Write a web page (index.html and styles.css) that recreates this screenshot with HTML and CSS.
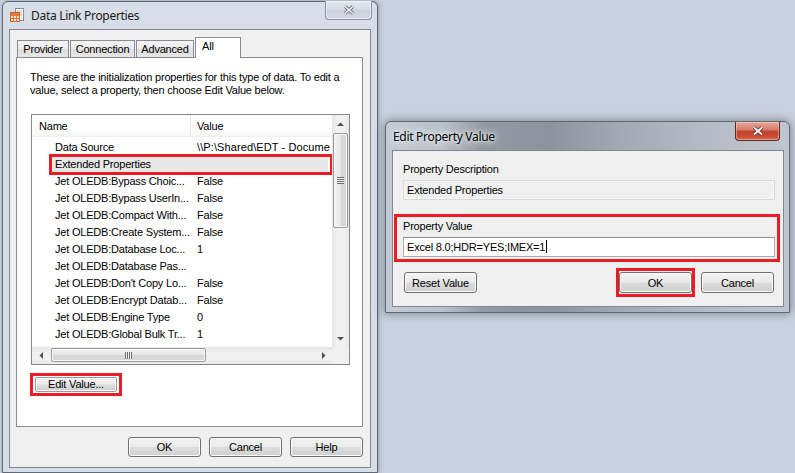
FILE: index.html
```html
<!DOCTYPE html>
<html><head><meta charset="utf-8"><title>Data Link Properties</title>
<link rel="stylesheet" href="styles.css">
</head><body>

<!-- Data Link Properties (inactive window) -->
<div class="win win-main">
	<div class="titlebar">
		<svg class="appicon" width="14" height="15" viewBox="0 0 14 15">
			<rect x="5.5" y="0.5" width="8" height="12" fill="#fff" stroke="#8c8c8c"/>
			<path d="M7 3h5M7 5h5M7 7h5" stroke="#b5b5b5"/>
			<rect x="0.5" y="4.5" width="9" height="9" fill="#fbe2c8" stroke="#d0602a"/>
			<path d="M0.5 7.5h9M0.5 10.5h9M3.5 4.5v9M6.5 4.5v9" stroke="#e07a3c"/>
			<rect x="1" y="5" width="8" height="2" fill="#e9743a"/>
		</svg>
		<span class="title">Data Link Properties</span>
		<div class="close close-off">
			<svg width="12" height="10" viewBox="0 0 12 10"><path d="M2 1.5l8 7M10 1.5l-8 7" stroke="#6d7581" stroke-width="3.4"/><path d="M2 1.5l8 7M10 1.5l-8 7" stroke="#f4f6f9" stroke-width="1.6"/></svg>
		</div>
	</div>
	<div class="client">
		<div class="tabs">
			<div class="tab t-provider">Provider</div>
			<div class="tab t-connection">Connection</div>
			<div class="tab t-advanced">Advanced</div>
			<div class="tab tab-on t-all">All</div>
		</div>
		<div class="panel">
			<div class="desc">These are the initialization properties for this type of data. To edit a<br>value, select a property, then choose Edit Value below.</div>
			<div class="listview">
				<div class="lv-body">
					<div class="lv-head"><div class="hcol hcol-name">Name</div><div class="hcol">Value</div></div>
					<div class="row"><span class="c-name">Data Source</span><span class="c-val c-wide">\\P:\Shared\EDT - Docume</span></div>
					<div class="row row-sel"><span class="c-name">Extended Properties</span><span class="c-val"></span><div class="mark mark-row"></div></div>
					<div class="row"><span class="c-name">Jet OLEDB:Bypass Choic...</span><span class="c-val">False</span></div>
					<div class="row"><span class="c-name">Jet OLEDB:Bypass UserIn...</span><span class="c-val">False</span></div>
					<div class="row"><span class="c-name">Jet OLEDB:Compact With...</span><span class="c-val">False</span></div>
					<div class="row"><span class="c-name">Jet OLEDB:Create System...</span><span class="c-val">False</span></div>
					<div class="row"><span class="c-name">Jet OLEDB:Database Loc...</span><span class="c-val">1</span></div>
					<div class="row"><span class="c-name">Jet OLEDB:Database Pas...</span><span class="c-val"></span></div>
					<div class="row"><span class="c-name">Jet OLEDB:Don't Copy Lo...</span><span class="c-val">False</span></div>
					<div class="row"><span class="c-name">Jet OLEDB:Encrypt Datab...</span><span class="c-val">False</span></div>
					<div class="row"><span class="c-name">Jet OLEDB:Engine Type</span><span class="c-val">0</span></div>
					<div class="row"><span class="c-name">Jet OLEDB:Global Bulk Tr...</span><span class="c-val">1</span></div>
				</div>
				<div class="vscroll">
					<div class="sbtn"><svg width="7" height="4" viewBox="0 0 7 4"><path d="M0 4h7L3.5 0.5z" fill="#505050"/></svg></div>
					<div class="vtrack"><div class="thumb vthumb"><span class="grip-v"></span></div></div>
					<div class="sbtn"><svg width="7" height="4" viewBox="0 0 7 4"><path d="M0 0h7L3.5 3.5z" fill="#505050"/></svg></div>
				</div>
				<div class="hscroll">
					<div class="sbtn"><svg width="4" height="7" viewBox="0 0 4 7"><path d="M4 0v7L0.5 3.5z" fill="#505050"/></svg></div>
					<div class="htrack"><div class="thumb hthumb"><span class="grip-h"></span></div></div>
					<div class="sbtn"><svg width="4" height="7" viewBox="0 0 4 7"><path d="M0 0v7L3.5 3.5z" fill="#505050"/></svg></div>
				</div>
				<div class="corner"></div>
			</div>
			<div class="mark mark-edit"><button class="btn btn-edit">Edit Value...</button></div>
		</div>
		<div class="btnrow">
			<button class="btn">OK</button>
			<button class="btn">Cancel</button>
			<button class="btn">Help</button>
		</div>
	</div>
</div>

<!-- Edit Property Value (active window) -->
<div class="win win-dlg">
	<div class="titlebar">
		<span class="title title-glow">Edit Property Value</span>
		<div class="close close-red">
			<svg width="12" height="10" viewBox="0 0 12 10"><path d="M2 1.5l8 7M10 1.5l-8 7" stroke="#5a2a22" stroke-width="3.6"/><path d="M2 1.5l8 7M10 1.5l-8 7" stroke="#fff" stroke-width="1.8"/></svg>
		</div>
	</div>
	<div class="client dlg-client">
		<div class="lbl">Property Description</div>
		<div class="field field-ro">Extended Properties</div>
		<div class="mark mark-value">
			<div class="lbl">Property Value</div>
			<div class="field field-in">Excel 8.0;HDR=YES;IMEX=1<span class="caret"></span></div>
		</div>
		<div class="dlg-btns">
			<button class="btn btn-dlg">Reset Value</button>
			<div class="mark mark-ok"><button class="btn btn-dlg">OK</button></div>
			<button class="btn btn-dlg">Cancel</button>
		</div>
	</div>
</div>

</body></html>
```

FILE: styles.css
```css
* { box-sizing: border-box; }

html, body { margin: 0; }

body {
	position: relative;
	width: 795px;
	height: 473px;
	overflow: hidden;
	background: #c8d0df;
	font-family: "Liberation Sans", Arial, sans-serif;
	font-size: 11px;
	letter-spacing: -0.2px;
	color: #000;
}

/* windows */
.win {
	position: absolute;
	display: flex;
	flex-direction: column;
	border: 1px solid #5f6772;
	border-radius: 6px 6px 0 0;
}

.win-main {
	left: 2px;
	top: 1px;
	width: 376px;
	height: 472px;
	padding: 0 6px 4px 6px;
	background: #d7dee8;
	box-shadow: 1px 0 4px rgba(0,0,0,0.25);
}

.win-dlg {
	left: 385px;
	top: 121px;
	width: 405px;
	height: 192px;
	padding: 0 5px 5px 6px;
	background: linear-gradient(to right, #c4cbd4 0%, #bac1ca 14%, #949aa3 24%, #8d939c 40%, #a2a9b2 58%, #b4bbc4 78%, #bfc6ce 100%);
	box-shadow: 0 0 9px 1px rgba(0,0,0,0.35);
}

.titlebar {
	display: flex;
	align-items: center;
	height: 27px;
	flex: none;
}

.win-dlg .titlebar {
	height: 28px;
	padding: 0 0 0 1px;
	align-items: flex-start;
}

.appicon { margin: 0 7px 0 1px; }

.title {
	font-family: "Noto Sans", "Liberation Sans", sans-serif;
	font-size: 12px;
	letter-spacing: -0.3px;
	color: #1a1a1a;
}

.title-glow {
	margin-top: 6px;
	color: #000;
	text-shadow: 0 0 6px #e6eaef, 0 0 10px #e6eaef, 0 0 3px #eef1f4;
}

.close {
	display: flex;
	align-items: center;
	justify-content: center;
	margin-left: auto;
	align-self: flex-start;
	border-radius: 0 0 4px 4px;
}

.close-off {
	width: 47px;
	height: 19px;
	margin-top: -1px;
	margin-right: -1px;
	border: 1px solid #8a929d;
	border-top: none;
	background: linear-gradient(#e3e8ee, #d3dae3 50%, #cbd2dc 51%, #d2d9e2);
	box-shadow: inset 0 0 0 1px rgba(255,255,255,0.5);
}

.close-red {
	width: 45px;
	height: 19px;
	margin-right: 4px;
	border: 1px solid #5c2a22;
	border-top: none;
	background: linear-gradient(#e9a89a, #d47a68 45%, #c0432c 50%, #c94d33 80%, #d9705a);
	box-shadow: inset 0 0 0 1px rgba(255,220,210,0.45);
}

.client {
	display: flex;
	flex-direction: column;
	height: 439px;
	padding: 7px 7px 10px 6px;
	border: 1px solid #7e8792;
	background: #f0f0f0;
}

/* tabs */
.tabs {
	display: flex;
	align-items: flex-end;
	height: 20px;
	padding-left: 1px;
	flex: none;
}

.tab {
	height: 17px;
	line-height: 16px;
	text-align: center;
	border: 1px solid #898c95;
	border-bottom: none;
	background: linear-gradient(#f3f3f3, #ebebeb 50%, #dedede 51%, #e6e6e6);
}

.t-provider { width: 52px; }
.t-connection { width: 65px; margin-left: 1px; }
.t-advanced { width: 58px; margin-left: 1px; }

.tab-on {
	position: relative;
	width: 46px;
	height: 21px;
	margin-bottom: -1px;
	margin-left: 1px;
	padding-left: 6px;
	line-height: 17px;
	text-align: left;
	background: #fff;
	z-index: 1;
}

.panel {
	flex: 1;
	padding: 13px 12px 0 14px;
	border: 1px solid #898c95;
	background: #fff;
}

.desc {
	line-height: 13px;
	white-space: nowrap;
	margin-left: -1px;
}

/* list view */
.listview {
	display: grid;
	grid-template-columns: 300px 17px;
	grid-template-rows: 232px 17px;
	width: 319px;
	height: 251px;
	margin-top: 17px;
	border: 1px solid #828790;
	background: #fff;
}

.lv-body { overflow: hidden; }

.lv-head {
	display: flex;
	height: 22px;
	line-height: 22px;
	margin-bottom: 2px;
	background: linear-gradient(#fff, #fff 55%, #f6f7f8);
	border-bottom: 1px solid #f0f0f0;
}

.hcol { padding-left: 6px; }

.hcol-name {
	width: 159px;
	padding-left: 7px;
	border-right: 1px solid #e3e5e8;
}

.row {
	position: relative;
	display: flex;
	height: 17px;
	line-height: 17px;
	white-space: nowrap;
}

.row-sel { background: linear-gradient(to right, transparent 18px, #e8e8e8 18px, #e8e8e8 296px, transparent 296px); }

.c-name {
	width: 165px;
	padding-left: 23px;
	flex: none;
}

.c-val {
	flex: 1;
	overflow: hidden;
}

.c-wide { letter-spacing: 0.1px; }

/* scroll bars */
.vscroll, .hscroll {
	display: flex;
	background: #eaeaea;
}

.vscroll {
	flex-direction: column;
	background: linear-gradient(to right, #e4e4e4, #f1f1f1 30%, #f1f1f1 70%, #e9e9e9);
}

.hscroll { background: linear-gradient(#e4e4e4, #f1f1f1 30%, #f1f1f1 70%, #e9e9e9); }

.sbtn {
	display: flex;
	align-items: center;
	justify-content: center;
	width: 17px;
	height: 17px;
	flex: none;
}

.vtrack, .htrack { flex: 1; }

.thumb {
	display: flex;
	align-items: center;
	justify-content: center;
	border: 1px solid #9a9a9a;
	border-radius: 2px;
	box-shadow: inset 0 0 0 1px #f8f8f8;
}

.vthumb {
	width: 15px;
	height: 95px;
	margin: 1px 0 0 1px;
	background: linear-gradient(to right, #f2f2f2, #e6e6e6 50%, #d6d6d6 51%, #dadada);
}

.hthumb {
	width: 155px;
	height: 14px;
	margin: 1px 0 0 2px;
	background: linear-gradient(#f2f2f2, #e6e6e6 50%, #d6d6d6 51%, #dadada);
}

.grip-v {
	width: 7px;
	height: 7px;
	background: repeating-linear-gradient(#6e6e6e 0 1px, #f0f0f0 1px 2px);
}

.grip-h {
	width: 7px;
	height: 7px;
	background: repeating-linear-gradient(to right, #6e6e6e 0 1px, #f0f0f0 1px 2px);
}

.corner { background: #f0f0f0; }

/* buttons */
.btn {
	display: block;
	width: 73px;
	height: 20px;
	padding: 0;
	border: 1px solid #707070;
	border-radius: 3px;
	background: linear-gradient(#f2f2f2, #ebebeb 48%, #dddddd 52%, #cfcfcf);
	box-shadow: inset 0 0 0 1px #fbfbfb;
	font-family: "Liberation Sans", Arial, sans-serif;
	font-size: 11px;
	letter-spacing: -0.2px;
	color: #000;
}

.btnrow {
	display: flex;
	justify-content: flex-end;
	gap: 8px;
	margin-top: 10px;
	flex: none;
}

.btn-edit {
	width: 82px;
	height: 15px;
	line-height: 13px;
	border-color: #9a9a9a;
	border-radius: 2px;
}

.btn-dlg { height: 21px; }

/* red annotation boxes */
.mark { border: 3px solid #ed1c24; }

.mark-row {
	position: absolute;
	left: 17px;
	top: -2px;
	width: 284px;
	height: 21px;
}

.mark-edit {
	display: inline-block;
	margin: 8px 0 0 -1px;
	padding: 1px 2px;
}

/* edit property value dialog */
.dlg-client {
	height: 157px;
	padding: 11px 0 9px 0;
}

.lbl {
	height: 14px;
	line-height: 14px;
	padding-left: 10px;
}

.field {
	height: 20px;
	line-height: 18px;
	padding-left: 3px;
	white-space: nowrap;
}

.field-ro {
	margin: 4px 8px 0 10px;
	border: 1px solid #d9d9d9;
	box-shadow: inset 0 0 0 1px #f7f7f7;
	background: #f0f0f0;
}

.mark-value {
	margin: 14px 3px 0 1px;
	padding: 2px 2px 2px 6px;
}

.mark-value .lbl { padding-left: 0; }

.field-in {
	margin-top: 4px;
	border: 1px solid #abadb3;
	border-top-color: #8e8f8f;
	background: #fff;
}

.caret {
	display: inline-block;
	width: 1px;
	height: 13px;
	margin-left: 1px;
	vertical-align: -2px;
	background: #000;
}

.dlg-btns {
	display: flex;
	align-items: center;
	gap: 6px;
	margin-top: 6px;
	padding: 0 9px 0 11px;
}

.mark-ok {
	margin-left: auto;
	padding: 1px 0;
}
```
